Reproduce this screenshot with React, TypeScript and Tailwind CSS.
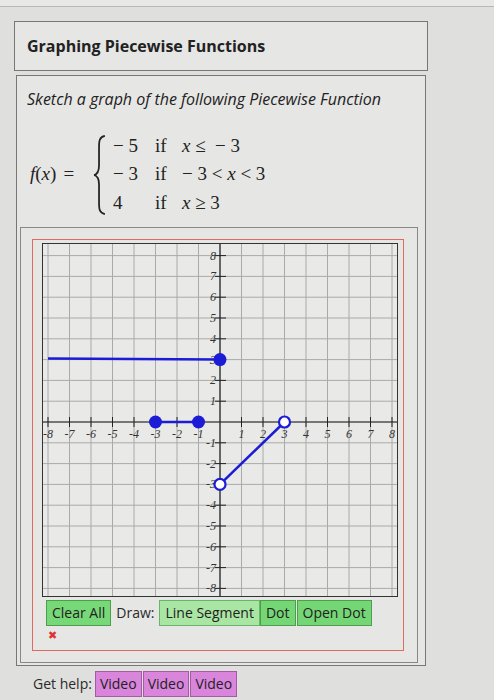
import React from "react";

const W = 356;
const H = 354;
const OX = 177;
const OY = 178;
const UX = 21.5;
const UY = 20.8;

const px = (x: number) => OX + x * UX;
const py = (y: number) => OY - y * UY;

const ticks = [-8, -7, -6, -5, -4, -3, -2, -1, 1, 2, 3, 4, 5, 6, 7, 8];
const all = [-8, -7, -6, -5, -4, -3, -2, -1, 0, 1, 2, 3, 4, 5, 6, 7, 8];

function Graph() {
  const blue = "#1c1cd6";
  return (
    <svg width={W} height={H} className="block bg-[#e9e9e7] border border-[#333]">
      {all.map((i) => (
        <line key={"v" + i} x1={px(i)} y1={0} x2={px(i)} y2={H} stroke="#aaa" strokeWidth={1} />
      ))}
      {all.map((i) => (
        <line key={"h" + i} x1={0} y1={py(i)} x2={W} y2={py(i)} stroke="#aaa" strokeWidth={1} />
      ))}
      {/* axes */}
      <line x1={0} y1={OY} x2={W} y2={OY} stroke="#222" strokeWidth={1.2} />
      <line x1={OX} y1={0} x2={OX} y2={H} stroke="#222" strokeWidth={1.2} />
      {ticks.map((i) => (
        <g key={"t" + i} fontFamily="'Liberation Serif', serif" fontStyle="italic" fontSize={12} fill="#333">
          <line x1={px(i)} y1={OY - 5} x2={px(i)} y2={OY + 5} stroke="#222" strokeWidth={1} />
          <text x={px(i)} y={OY + 16} textAnchor="middle">
            {i}
          </text>
          <line x1={OX - 5} y1={py(i)} x2={OX + 6} y2={py(i)} stroke="#222" strokeWidth={1} />
          <text x={OX - 4} y={py(i) + 4} textAnchor="end">
            {i}
          </text>
        </g>
      ))}
      {/* student sketch */}
      <line x1={px(-8)} y1={py(3) - 1} x2={px(0)} y2={py(3)} stroke={blue} strokeWidth={2.5} />
      <circle cx={px(0)} cy={py(3)} r={6.5} fill={blue} />
      <line x1={px(-3)} y1={py(0)} x2={px(-1)} y2={py(0)} stroke={blue} strokeWidth={2.5} />
      <circle cx={px(-3)} cy={py(0)} r={6.5} fill={blue} />
      <circle cx={px(-1)} cy={py(0)} r={6.5} fill={blue} />
      <line x1={px(0)} y1={py(-3)} x2={px(3)} y2={py(0)} stroke={blue} strokeWidth={2.5} />
      <circle cx={px(0)} cy={py(-3)} r={5.5} fill="#fff" stroke={blue} strokeWidth={2.2} />
      <circle cx={px(3)} cy={py(0)} r={5.5} fill="#fff" stroke={blue} strokeWidth={2.2} />
    </svg>
  );
}

function Formula() {
  return (
    <div className="mt-[21px] ml-[13px] flex h-[85px] items-center font-['Liberation_Serif',serif] text-[19px] text-[#222]">
      <span className="w-[60px]">
        <i>f</i>(<i>x</i>)<span className="ml-[7px]">=</span>
      </span>
      <svg width={14} height={82} viewBox="0 0 14 84" className="ml-[3px] mr-[6px]">
        <path
          d="M12 2 C6 3 6 8 6 14 L6 32 C6 38 5 41 1 42 C5 43 6 46 6 52 L6 70 C6 76 6 81 12 82"
          fill="none"
          stroke="#222"
          strokeWidth={1.8}
        />
      </svg>
      <div className="grid grid-cols-[42px_27px_auto] leading-[28.5px]">
        <span>− 5</span>
        <span>if</span>
        <span>
          <i>x</i> ≤ &nbsp;− 3
        </span>
        <span>− 3</span>
        <span>if</span>
        <span>
          − 3 &lt; <i>x</i> &lt; 3
        </span>
        <span>4</span>
        <span>if</span>
        <span>
          <i>x</i> ≥ 3
        </span>
      </div>
    </div>
  );
}

export default function App() {
  return (
    <div className="min-h-[700px] w-[494px] bg-[#dfdfdd] font-['Open_Sans',sans-serif] text-[#2a2a2a]">
      <div className="h-[7px] border-b border-[#b9b9b9] bg-[#e8e8e6]" />
      <div className="ml-[14px] mt-[14px] flex h-[50px] w-[414px] items-center border border-[#777] bg-[#e6e6e4] pl-[12px]">
        <h1 className="text-[16px] font-bold text-[#222]">Graphing Piecewise Functions</h1>
      </div>
      <div className="ml-[16px] mt-[4px] w-[410px] border border-[#777] bg-[#e6e6e4] pb-[2px] pt-[11px]">
        <p className="pl-[10px] text-[16px] italic leading-[24px] text-[#222]">
          Sketch a graph of the following Piecewise Function
        </p>
        <Formula />
        <div className="ml-[3px] mt-[10px] w-[398px] border border-[#888] pb-[11px] pl-[11px] pt-[11px]">
          <div className="w-[372px] border border-[#e06a5f] pb-[8px] pl-[9px] pt-[3px]">
            <Graph />
            <div className="ml-[4px] mt-[3px] flex items-center text-[14px] leading-[24px]">
              <button className="border border-[#4e9e4e] bg-[#77d877] px-[5px] text-[#222]">Clear All</button>
              <span className="ml-[5px] mr-[5px]">Draw:</span>
              <button className="border border-[#68b468] bg-[#a9e5a3] px-[5px] text-[#222]">Line Segment</button>
              <button className="border border-[#4e9e4e] bg-[#74d674] px-[5px] text-[#222]">Dot</button>
              <button className="ml-[1px] border border-[#4e9e4e] bg-[#74d674] px-[5px] text-[#222]">Open Dot</button>
            </div>
            <div className="mt-[2px] h-[14px] pl-[6px] text-[11px] leading-[14px] text-[#d33]">✖</div>
          </div>
        </div>
      </div>
      <div className="ml-[33px] mt-[5px] flex items-center text-[14px] leading-[24px]">
        <span className="mr-[3px]">Get help:</span>
        <button className="border border-[#a65aa6] bg-[#d985dc] px-[4px] text-[#222]">Video</button>
        <button className="ml-[1px] border border-[#a65aa6] bg-[#d985dc] px-[4px] text-[#222]">Video</button>
        <button className="ml-[1px] border border-[#a65aa6] bg-[#d985dc] px-[4px] text-[#222]">Video</button>
      </div>
    </div>
  );
}
